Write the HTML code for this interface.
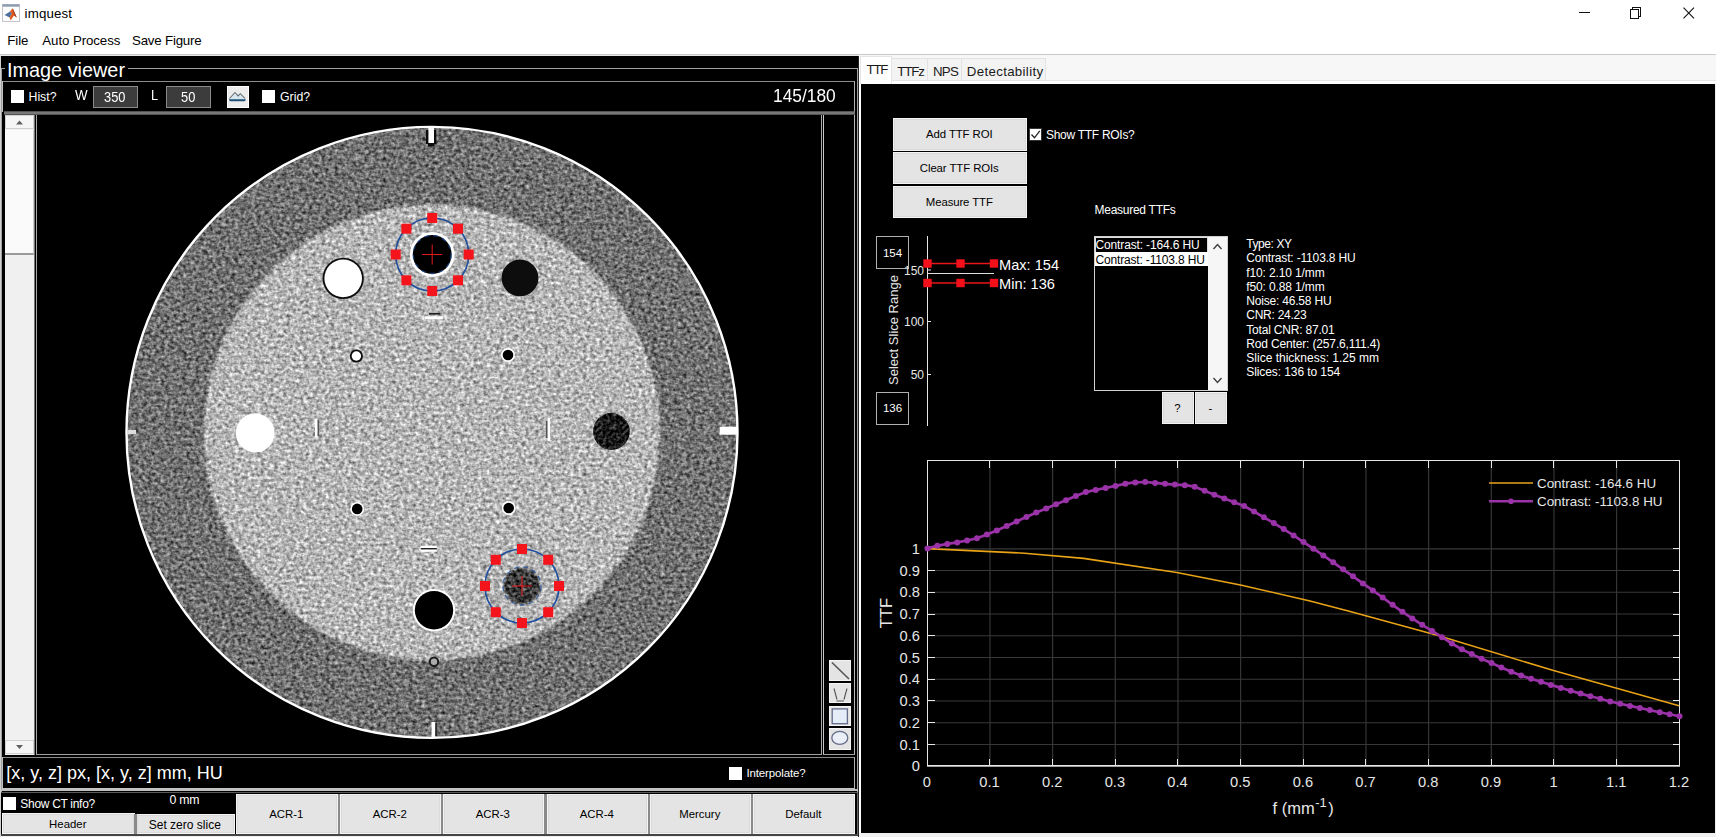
<!DOCTYPE html>
<html><head><meta charset="utf-8"><title>imquest</title>
<style>
html,body{margin:0;padding:0;}
body{width:1716px;height:837px;overflow:hidden;background:#fff;position:relative;font-family:"Liberation Sans",sans-serif;}
.t{position:absolute;white-space:nowrap;line-height:normal;font-family:"Liberation Sans",sans-serif;}
svg{position:absolute;left:0;top:0;overflow:visible}
</style></head><body>
<svg width="24" height="24" viewBox="0 0 24 24" style="left:0px;top:0px">
<rect x="2.5" y="4.5" width="17" height="17" fill="#fdfdfd" stroke="#c9c2c9" stroke-width="1"/>
<rect x="2.5" y="4.3" width="17" height="2.4" fill="#8d9db2"/>
<path d="M4.6 15 L10 11.4 L12 13.6 L9.6 17.6 Z" fill="#4f6f9e"/>
<path d="M10 11.4 L12.7 8.2 L14.8 13 L16.8 17.4 L14 15.6 L10.6 20.4 L9.6 17.6 L12 13.6 Z" fill="#e0581c"/>
<path d="M12.7 8.2 L14.8 13 L16.8 17.4 L14.6 15.8 L13.4 12 Z" fill="#9a3a26"/>
</svg>
<span class="t" style="left:24.60px;top:6.46px;font-size:13.30px;color:#000;letter-spacing:0.147px;">imquest</span>
<svg width="1716" height="30">
<path d="M1578.5 12.5 H1589.5" stroke="#111" stroke-width="1" fill="none" shape-rendering="crispEdges"/>
<path d="M1630.5 9.5 H1638.5 V18.5 H1630.5 Z M1632.5 9.5 V7.5 H1640.5 V16.5 H1638.5" stroke="#111" stroke-width="1" fill="none" shape-rendering="crispEdges"/>
<path d="M1683.5 7.7 L1694 18.4 M1694 7.7 L1683.5 18.4" stroke="#111" stroke-width="1.1" fill="none"/>
</svg>
<span class="t" style="left:7.20px;top:33.46px;font-size:13.30px;color:#000;letter-spacing:-0.058px;">File</span>
<span class="t" style="left:42.30px;top:33.46px;font-size:13.30px;color:#000;letter-spacing:-0.092px;">Auto Process</span>
<span class="t" style="left:132.00px;top:33.46px;font-size:13.30px;color:#000;letter-spacing:-0.201px;">Save Figure</span>
<div style="position:absolute;left:0px;top:54px;width:1716px;height:1px;background:#c9c9c9"></div>
<div style="position:absolute;left:0px;top:55px;width:1716px;height:1px;background:#e6e6e6"></div>
<div style="position:absolute;left:1px;top:56px;width:858px;height:780px;background:#000"></div>
<div style="position:absolute;left:0px;top:836px;width:859px;height:1px;background:#eee"></div>
<div style="position:absolute;left:0px;top:56px;width:1px;height:781px;background:#d0d0d0"></div>
<svg width="1716" height="837" shape-rendering="crispEdges"><rect x="1" y="68" width="4" height="1" fill="#a0a0a0"/><rect x="128" y="68" width="730" height="1" fill="#a0a0a0"/><rect x="1" y="68" width="1" height="724" fill="#a0a0a0"/><rect x="857" y="68" width="1" height="724" fill="#a0a0a0"/><rect x="1" y="789" width="857" height="1.7" fill="#c0c0c0"/><rect x="1" y="792" width="857" height="1" fill="#5a5a5a"/><rect x="1" y="834.3" width="857" height="1.2" fill="#444"/><rect x="857" y="792" width="1" height="43" fill="#666"/><rect x="2" y="81" width="853" height="1" fill="#8c8c8c"/><rect x="2" y="81" width="1" height="31" fill="#c0c0c0"/><rect x="854" y="81" width="1" height="31" fill="#b0b0b0"/><rect x="36" y="115" width="1" height="640" fill="#a8a8a8"/><rect x="821" y="115" width="1" height="640" fill="#a8a8a8"/><rect x="36" y="754" width="786" height="1" fill="#a0a0a0"/><rect x="823" y="115" width="1" height="640" fill="#c8c8c8"/><rect x="854" y="115" width="1" height="640" fill="#b8b8b8"/><rect x="823" y="754" width="32" height="1" fill="#a0a0a0"/><rect x="2" y="757" width="853" height="1" fill="#8a8a8a"/><rect x="2" y="757" width="1" height="32" fill="#c0c0c0"/><rect x="854" y="757" width="1" height="32" fill="#b0b0b0"/><rect x="2" y="788" width="853" height="1" fill="#c4c4c4"/></svg>
<svg width="1716" height="837"><rect x="4" y="111.3" width="851" height="3.4" fill="#787878"/></svg>
<span class="t" style="left:7.00px;top:59.24px;font-size:19.85px;color:#fff;">Image viewer</span>
<div style="position:absolute;left:11px;top:90px;width:13px;height:13px;background:#fff"></div>
<span class="t" style="left:28.50px;top:90.47px;font-size:12.30px;color:#fff;">Hist?</span>
<span class="t" style="left:75.30px;top:86.55px;font-size:14.20px;color:#fff;transform:scaleX(0.9400);transform-origin:0 0;">W</span>
<div style="position:absolute;left:93px;top:86px;width:45px;height:22px;background:#3c3c3c;border:1px solid #8a8a8a;box-sizing:border-box"></div>
<span class="t" style="left:103.89px;top:89.51px;font-size:13.80px;color:#fff;transform:scaleX(0.9300);transform-origin:0 0;">350</span>
<span class="t" style="left:151.00px;top:86.55px;font-size:14.20px;color:#fff;transform:scaleX(0.9000);transform-origin:0 0;">L</span>
<div style="position:absolute;left:166px;top:86px;width:45px;height:22px;background:#3c3c3c;border:1px solid #8a8a8a;box-sizing:border-box"></div>
<span class="t" style="left:180.66px;top:89.51px;font-size:13.80px;color:#fff;transform:scaleX(0.9300);transform-origin:0 0;">50</span>
<div style="position:absolute;left:227px;top:86px;width:22px;height:22px;background:#ececec;border:1px solid #fff;box-sizing:border-box"></div>
<svg width="22" height="22" style="left:227px;top:86px">
<path d="M2.5 12.5 L8 6.5 L11.5 10 L13.5 8 L18 12.5 L18 14.5 L3 14.5 Z" fill="#d7e7f0"/>
<path d="M2.5 12.5 L8 6.5 L11.5 10.3 M11 10 L13.3 7.7 L18 12.3" stroke="#6b6f72" stroke-width="1.1" fill="none"/>
<path d="M2 13.2 H18.6 V14 Q18.6 15.2 17 15.2 H3.5 Q2 15.2 2 13.2Z" fill="#1f4e74"/>
</svg>
<div style="position:absolute;left:262px;top:90px;width:13px;height:13px;background:#fff"></div>
<span class="t" style="left:280.00px;top:90.47px;font-size:12.30px;color:#fff;">Grid?</span>
<span class="t" style="left:773.30px;top:86.03px;font-size:18.20px;color:#fff;transform:scaleX(0.9550);transform-origin:0 0;">145/180</span>
<div style="position:absolute;left:5px;top:115px;width:29px;height:640px;background:#f0f0f0"></div>
<div style="position:absolute;left:34px;top:115px;width:1px;height:640px;background:#777"></div>
<div style="position:absolute;left:5px;top:115px;width:29px;height:14px;background:#f5f5f5;border:1px solid #d0d0d0;box-sizing:border-box"></div>
<div style="position:absolute;left:5px;top:740px;width:29px;height:14px;background:#f5f5f5;border:1px solid #d0d0d0;box-sizing:border-box"></div>
<div style="position:absolute;left:5px;top:130px;width:29px;height:125px;background:#fafafa;border-bottom:2px solid #9a9a9a;border-right:1px solid #ccc;box-sizing:border-box"></div>
<svg width="40" height="760"><path d="M16 124.5 L19.5 120.5 L23 124.5Z" fill="#606060"/><path d="M16 745 L23 745 L19.5 749Z" fill="#606060"/></svg>
<span class="t" style="left:6.30px;top:762.71px;font-size:18.00px;color:#fff;">[x, y, z] px, [x, y, z] mm, HU</span>
<div style="position:absolute;left:729px;top:767px;width:13px;height:13px;background:#fff"></div>
<span class="t" style="left:746.50px;top:766.79px;font-size:11.50px;color:#fff;letter-spacing:-0.145px;">Interpolate?</span>
<div style="position:absolute;left:3px;top:797px;width:13px;height:13px;background:#fff"></div>
<span class="t" style="left:20.30px;top:797.34px;font-size:12.00px;color:#fff;letter-spacing:-0.299px;">Show CT info?</span>
<span class="t" style="left:169.50px;top:793.37px;font-size:12.30px;color:#fff;letter-spacing:-0.288px;">0 mm</span>
<div style="position:absolute;left:2px;top:813px;width:133px;height:21px;background:#e4e4e4;border:1px solid #f4f4f4;box-shadow:inset 0 0 0 1px #dadada;box-sizing:border-box;"></div><span class="t" style="left:49.10px;top:818.26px;font-size:11.40px;color:#000;">Header</span>
<div style="position:absolute;left:136px;top:814px;width:99px;height:20px;background:#e4e4e4;border:1px solid #f4f4f4;box-shadow:inset 0 0 0 1px #dadada;box-sizing:border-box;"></div><span class="t" style="left:148.70px;top:817.94px;font-size:12.00px;color:#000;letter-spacing:0.012px;">Set zero slice</span>
<div style="position:absolute;left:236px;top:794px;width:619px;height:40px;background:#8a8a8a"></div>
<div style="position:absolute;left:134px;top:814px;width:3px;height:20px;background:#8a8a8a"></div>
<div style="position:absolute;left:236px;top:794px;width:102px;height:40px;background:#e4e4e4;border:1px solid #f4f4f4;box-shadow:inset 0 0 0 1px #dadada;box-sizing:border-box;"></div><span class="t" style="left:269.20px;top:808.26px;font-size:11.40px;color:#000;">ACR-1</span>
<div style="position:absolute;left:340px;top:794px;width:101px;height:40px;background:#e4e4e4;border:1px solid #f4f4f4;box-shadow:inset 0 0 0 1px #dadada;box-sizing:border-box;"></div><span class="t" style="left:372.70px;top:808.26px;font-size:11.40px;color:#000;">ACR-2</span>
<div style="position:absolute;left:443px;top:794px;width:101px;height:40px;background:#e4e4e4;border:1px solid #f4f4f4;box-shadow:inset 0 0 0 1px #dadada;box-sizing:border-box;"></div><span class="t" style="left:475.70px;top:808.26px;font-size:11.40px;color:#000;">ACR-3</span>
<div style="position:absolute;left:547px;top:794px;width:101px;height:40px;background:#e4e4e4;border:1px solid #f4f4f4;box-shadow:inset 0 0 0 1px #dadada;box-sizing:border-box;"></div><span class="t" style="left:579.70px;top:808.26px;font-size:11.40px;color:#000;">ACR-4</span>
<div style="position:absolute;left:650px;top:794px;width:101px;height:40px;background:#e4e4e4;border:1px solid #f4f4f4;box-shadow:inset 0 0 0 1px #dadada;box-sizing:border-box;"></div><span class="t" style="left:679.21px;top:808.26px;font-size:11.40px;color:#000;">Mercury</span>
<div style="position:absolute;left:753px;top:794px;width:102px;height:40px;background:#e4e4e4;border:1px solid #f4f4f4;box-shadow:inset 0 0 0 1px #dadada;box-sizing:border-box;"></div><span class="t" style="left:785.24px;top:808.26px;font-size:11.40px;color:#000;">Default</span>
<div style="position:absolute;left:829.4px;top:660px;width:21.6px;height:21px;background:#e4e4e4;border:1px solid #f4f4f4;box-sizing:border-box"></div>
<div style="position:absolute;left:829.4px;top:683px;width:21.6px;height:20px;background:#e4e4e4;border:1px solid #f4f4f4;box-sizing:border-box"></div>
<div style="position:absolute;left:829.4px;top:706px;width:21.6px;height:20px;background:#e4e4e4;border:1px solid #f4f4f4;box-sizing:border-box"></div>
<div style="position:absolute;left:829.4px;top:728px;width:21.6px;height:22px;background:#e4e4e4;border:1px solid #f4f4f4;box-sizing:border-box"></div>
<svg width="1716" height="837">
<path d="M832 662.5 L849 679" stroke="#555" stroke-width="1.6" fill="none"/>
<path d="M834 688.5 L837 699.5 M847 688.5 L844 699.5 M836.5 701 H844" stroke="#555" stroke-width="1.1" fill="none"/>
<rect x="832.2" y="708.9" width="15.2" height="14.8" fill="#e4ecf8" stroke="#626c88" stroke-width="1.3"/>
<ellipse cx="839.8" cy="737.8" rx="8" ry="6.5" fill="#e9eef7" stroke="#626c88" stroke-width="1.3"/>
</svg>
<svg width="1716" height="837">
<defs>
<filter id="nz" x="0" y="0" width="100%" height="100%" color-interpolation-filters="sRGB">
<feTurbulence type="fractalNoise" baseFrequency="0.31 0.26" numOctaves="2" seed="7" result="n1"/>
<feTurbulence type="fractalNoise" baseFrequency="0.23 0.34" numOctaves="2" seed="23" result="n2"/>
<feComposite in="n1" in2="n2" operator="arithmetic" k1="0" k2="0.5" k3="0.5" k4="0" result="n"/>
<feColorMatrix in="n" type="matrix" values="1 0 0 0 0  1 0 0 0 0  1 0 0 0 0  0 0 0 0 1" result="g"/>
<feGaussianBlur in="SourceGraphic" stdDeviation="0.8" result="b"/>
<feComposite in="b" in2="g" operator="arithmetic" k1="0" k2="1" k3="1.2" k4="-0.6" result="s"/>
<feComposite in="s" in2="SourceGraphic" operator="in"/>
</filter>
<filter id="nz2" x="0" y="0" width="100%" height="100%" color-interpolation-filters="sRGB">
<feTurbulence type="fractalNoise" baseFrequency="0.3" numOctaves="2" seed="11" result="n"/>
<feColorMatrix in="n" type="matrix" values="1 0 0 0 0  1 0 0 0 0  1 0 0 0 0  0 0 0 0 1" result="g"/>
<feComposite in="SourceGraphic" in2="g" operator="arithmetic" k1="0" k2="1" k3="0.8" k4="-0.38" result="s"/>
<feComposite in="s" in2="SourceGraphic" operator="in"/>
</filter>
<filter id="sf" x="-5%" y="-5%" width="110%" height="110%"><feGaussianBlur stdDeviation="0.7"/></filter>
</defs>
<g filter="url(#nz)">
<circle cx="432" cy="432.4" r="305.5" fill="#707070"/>
<circle cx="432" cy="432.4" r="228" fill="#b4b4b4"/>
<circle cx="522" cy="586" r="18" fill="#3a3a3a"/>
</g>
<g filter="url(#nz2)"><circle cx="611.4" cy="431.5" r="18.4" fill="#161616"/></g>
<circle cx="432" cy="432.4" r="305.5" fill="none" stroke="#fff" stroke-width="2.4" filter="url(#sf)"/>
<g filter="url(#sf)">
<!-- rods -->
<circle cx="343.2" cy="278.4" r="20.6" fill="#0a0a0a"/><circle cx="343.2" cy="278.4" r="18.8" fill="#fff"/>
<circle cx="520" cy="277.9" r="18.4" fill="#0b0b0b"/>
<circle cx="255.2" cy="433" r="19.4" fill="#fff"/>
<circle cx="432.2" cy="254.5" r="22.4" fill="#fff"/><circle cx="432.2" cy="254.5" r="19.4" fill="#050505"/>
<circle cx="434" cy="610.2" r="21.2" fill="#fff"/><circle cx="434" cy="610.2" r="19.2" fill="#000"/>
<!-- small dots -->
<circle cx="356.4" cy="356" r="6.6" fill="#111"/><circle cx="356.4" cy="356" r="4.7" fill="#fff"/>
<circle cx="508" cy="355" r="7" fill="#fff"/><circle cx="508" cy="355" r="5.3" fill="#000"/>
<circle cx="357.2" cy="508.9" r="7" fill="#fff"/><circle cx="357.2" cy="508.9" r="5.3" fill="#000"/>
<circle cx="508.7" cy="508" r="7" fill="#fff"/><circle cx="508.7" cy="508" r="5.3" fill="#000"/>
<circle cx="434" cy="661.7" r="4.2" fill="#aaa" stroke="#1a1a1a" stroke-width="2"/>
<!-- edge markers -->
<rect x="428.3" y="126" width="5.7" height="17" fill="#fff"/><rect x="426" y="130" width="2.3" height="14" fill="#111"/><rect x="434" y="130" width="2.3" height="14" fill="#111"/><rect x="428" y="143" width="6.5" height="3.5" fill="#111"/>
<rect x="431.5" y="722" width="3.8" height="16" fill="#fff"/><rect x="435.3" y="723" width="1.6" height="13" fill="#222"/>
<rect x="719.6" y="426.7" width="18.4" height="8" fill="#fff"/>
<rect x="127" y="430" width="9" height="4" fill="#ddd"/>
<!-- inner ticks -->
<rect x="425" y="316.3" width="17.7" height="3" fill="#fff"/><rect x="429" y="313" width="11" height="1.6" fill="#222"/>
<rect x="420.8" y="545.8" width="16" height="2.2" fill="#fff"/><rect x="420.8" y="548" width="16" height="1.6" fill="#222"/><rect x="420.8" y="549.6" width="16" height="2.2" fill="#fff"/>
<rect x="315" y="418.7" width="2.6" height="19" fill="#fff"/><rect x="317.6" y="420" width="1.6" height="16" fill="#555"/>
<rect x="547.6" y="418" width="2.6" height="23" fill="#fff"/><rect x="545.8" y="421" width="1.6" height="17" fill="#555"/>
</g>
</svg>
<svg width="1716" height="837"><circle cx="432.2" cy="254.5" r="36.5" fill="none" stroke="#1f4f9e" stroke-width="1.6"/><circle cx="432.2" cy="254.5" r="19" fill="none" stroke="#1f4f9e" stroke-width="1.3" stroke-dasharray="5 4" opacity="0.75"/><path d="M422.2 254.5 h20 M432.2 244.5 v20" stroke="#e8181c" stroke-width="1" fill="none"/><rect x="463.7" y="249.5" width="10" height="10" fill="#f4141c"/><rect x="453.0" y="275.3" width="10" height="10" fill="#f4141c"/><rect x="427.2" y="286.0" width="10" height="10" fill="#f4141c"/><rect x="401.4" y="275.3" width="10" height="10" fill="#f4141c"/><rect x="390.7" y="249.5" width="10" height="10" fill="#f4141c"/><rect x="401.4" y="223.7" width="10" height="10" fill="#f4141c"/><rect x="427.2" y="213.0" width="10" height="10" fill="#f4141c"/><rect x="453.0" y="223.7" width="10" height="10" fill="#f4141c"/><circle cx="522" cy="586" r="37" fill="none" stroke="#1f4f9e" stroke-width="1.6"/><circle cx="522" cy="586" r="19" fill="none" stroke="#1f4f9e" stroke-width="1.3" stroke-dasharray="5 4" opacity="0.75"/><path d="M512 586 h20 M522 576 v20" stroke="#e8181c" stroke-width="1" fill="none"/><rect x="554.0" y="581.0" width="10" height="10" fill="#f4141c"/><rect x="543.2" y="607.2" width="10" height="10" fill="#f4141c"/><rect x="517.0" y="618.0" width="10" height="10" fill="#f4141c"/><rect x="490.8" y="607.2" width="10" height="10" fill="#f4141c"/><rect x="480.0" y="581.0" width="10" height="10" fill="#f4141c"/><rect x="490.8" y="554.8" width="10" height="10" fill="#f4141c"/><rect x="517.0" y="544.0" width="10" height="10" fill="#f4141c"/><rect x="543.2" y="554.8" width="10" height="10" fill="#f4141c"/></svg>
<div style="position:absolute;left:859px;top:55px;width:857px;height:25px;background:#f7f7f7"></div>
<div style="position:absolute;left:859px;top:80px;width:857px;height:1px;background:#e6e6e6"></div>
<div style="position:absolute;left:859px;top:81px;width:857px;height:3px;background:#fff"></div>
<div style="position:absolute;left:859px;top:56px;width:2px;height:781px;background:#fff"></div>
<div style="position:absolute;left:858px;top:56px;width:1px;height:781px;background:#222"></div>
<div style="position:absolute;left:861px;top:84px;width:854px;height:749px;background:#000"></div>
<div style="position:absolute;left:859px;top:833px;width:857px;height:4px;background:#f0f0f0"></div>
<div style="position:absolute;left:1715px;top:84px;width:1px;height:753px;background:#f0f0f0"></div>
<div style="position:absolute;left:860px;top:56px;width:32px;height:28px;background:#fff;border-left:1px solid #e4e4e4;border-top:1px solid #e4e4e4;border-right:1px solid #e4e4e4;box-sizing:border-box"></div>
<div style="position:absolute;left:892px;top:58px;width:36px;height:23px;background:#f3f3f3;border:1px solid #e2e2e2;border-left:none;box-sizing:border-box"></div>
<div style="position:absolute;left:928px;top:58px;width:34px;height:23px;background:#f3f3f3;border:1px solid #e2e2e2;border-left:none;box-sizing:border-box"></div>
<div style="position:absolute;left:962px;top:58px;width:84px;height:23px;background:#f3f3f3;border:1px solid #e2e2e2;border-left:none;box-sizing:border-box"></div>
<span class="t" style="left:866.60px;top:61.96px;font-size:13.30px;color:#1a1a1a;letter-spacing:-1.258px;">TTF</span>
<span class="t" style="left:897.20px;top:63.66px;font-size:13.30px;color:#1a1a1a;letter-spacing:-1.106px;">TTFz</span>
<span class="t" style="left:933.00px;top:63.66px;font-size:13.30px;color:#1a1a1a;letter-spacing:-0.783px;">NPS</span>
<span class="t" style="left:966.80px;top:63.66px;font-size:13.30px;color:#1a1a1a;letter-spacing:0.320px;">Detectability</span>
<div style="position:absolute;left:893px;top:118px;width:134px;height:33px;background:#e4e4e4;border:1px solid #f4f4f4;box-shadow:inset 0 0 0 1px #dadada;box-sizing:border-box;"></div><span class="t" style="left:926.05px;top:128.26px;font-size:11.40px;color:#000;letter-spacing:-0.097px;">Add TTF ROI</span>
<div style="position:absolute;left:893px;top:152px;width:134px;height:32px;background:#e4e4e4;border:1px solid #f4f4f4;box-shadow:inset 0 0 0 1px #dadada;box-sizing:border-box;"></div><span class="t" style="left:919.80px;top:161.76px;font-size:11.40px;color:#000;letter-spacing:-0.088px;">Clear TTF ROIs</span>
<div style="position:absolute;left:893px;top:186px;width:134px;height:32px;background:#e4e4e4;border:1px solid #f4f4f4;box-shadow:inset 0 0 0 1px #dadada;box-sizing:border-box;"></div><span class="t" style="left:925.80px;top:195.76px;font-size:11.40px;color:#000;letter-spacing:-0.110px;">Measure TTF</span>
<div style="position:absolute;left:1029px;top:128px;width:13px;height:13px;background:#fff;border:1px solid #333;box-sizing:border-box"></div>
<svg width="1716" height="300"><path d="M1031.5 134.5 L1034.5 137.8 L1039.8 130.8" stroke="#222" stroke-width="1.3" fill="none"/></svg>
<span class="t" style="left:1046.00px;top:127.94px;font-size:12.00px;color:#fff;letter-spacing:-0.283px;">Show TTF ROIs?</span>
<span class="t" style="left:1094.50px;top:202.64px;font-size:12.00px;color:#fff;letter-spacing:-0.267px;">Measured TTFs</span>
<div style="position:absolute;left:876px;top:236px;width:33px;height:33px;background:#000;border:1px solid #b0b0b0;box-sizing:border-box"></div>
<span class="t" style="left:882.91px;top:246.79px;font-size:11.50px;color:#fff;">154</span>
<div style="position:absolute;left:876px;top:392px;width:33px;height:33px;background:#000;border:1px solid #b0b0b0;box-sizing:border-box"></div>
<span class="t" style="left:882.91px;top:401.89px;font-size:11.50px;color:#fff;">136</span>
<svg width="1716" height="837"><path d="M927.5 236 V426" stroke="#e6e6e6" stroke-width="1" shape-rendering="crispEdges"/><path d="M927 270 H931" stroke="#e6e6e6" stroke-width="1"/><path d="M927 321.5 H931" stroke="#e6e6e6" stroke-width="1"/><path d="M927 374.5 H931" stroke="#e6e6e6" stroke-width="1"/><path d="M927 273.5 H994" stroke="#e0e0e0" stroke-width="1" shape-rendering="crispEdges"/><path d="M927 263.5 H994" stroke="#e8161a" stroke-width="1.3"/><rect x="923.3" y="259.3" width="8.4" height="8.4" fill="#f4101a"/><rect x="956.3" y="259.3" width="8.4" height="8.4" fill="#f4101a"/><rect x="989.8" y="259.3" width="8.4" height="8.4" fill="#f4101a"/><path d="M927 283 H994" stroke="#e8161a" stroke-width="1.3"/><rect x="923.3" y="278.8" width="8.4" height="8.4" fill="#f4101a"/><rect x="956.3" y="278.8" width="8.4" height="8.4" fill="#f4101a"/><rect x="989.8" y="278.8" width="8.4" height="8.4" fill="#f4101a"/></svg>
<span class="t" style="left:903.98px;top:263.64px;font-size:12.00px;color:#e6e6e6;">150</span>
<span class="t" style="left:903.98px;top:314.64px;font-size:12.00px;color:#e6e6e6;">100</span>
<span class="t" style="left:910.65px;top:368.14px;font-size:12.00px;color:#e6e6e6;">50</span>
<span class="t" style="left:999.00px;top:256.99px;font-size:14.60px;color:#fff;">Max: 154</span>
<span class="t" style="left:999.00px;top:275.99px;font-size:14.60px;color:#fff;">Min: 136</span>
<span class="t" style="left:892.5px;top:330px;font-size:13px;color:#e6e6e6;transform:translate(-50%,-50%) rotate(-90deg);">Select Slice Range</span>
<div style="position:absolute;left:1094px;top:236px;width:134px;height:155px;background:#000;border:1px solid #d0d0d0;box-sizing:border-box"></div>
<div style="position:absolute;left:1208px;top:237px;width:19px;height:153px;background:#f6f6f6"></div>
<div style="position:absolute;left:1095px;top:237px;width:113px;height:14.5px;background:#000;border:1px solid #ddd;border-bottom:none;box-sizing:border-box"></div>
<div style="position:absolute;left:1095px;top:251.5px;width:113px;height:14px;background:#fff"></div>
<span class="t" style="left:1095.50px;top:237.94px;font-size:12.00px;color:#fff;letter-spacing:-0.143px;">Contrast: -164.6 HU</span>
<span class="t" style="left:1095.50px;top:252.74px;font-size:12.00px;color:#000;letter-spacing:-0.165px;">Contrast: -1103.8 HU</span>
<svg width="1716" height="837"><path d="M1213.5 249 L1217.5 244.5 L1221.5 249 M1213.5 378 L1217.5 382.5 L1221.5 378" stroke="#404040" stroke-width="1.4" fill="none"/></svg>
<div style="position:absolute;left:1162px;top:392px;width:32px;height:32px;background:#e4e4e4;border:1px solid #f4f4f4;box-shadow:inset 0 0 0 1px #dadada;box-sizing:border-box;"></div><span class="t" style="left:1174.13px;top:401.76px;font-size:11.40px;color:#000;">?</span>
<div style="position:absolute;left:1195px;top:392px;width:32px;height:32px;background:#e4e4e4;border:1px solid #f4f4f4;box-shadow:inset 0 0 0 1px #dadada;box-sizing:border-box;"></div><span class="t" style="left:1208.40px;top:401.76px;font-size:11.40px;color:#000;">-</span>
<span class="t" style="left:1246.30px;top:237.14px;font-size:12.00px;color:#fff;letter-spacing:-0.424px;">Type: XY</span>
<span class="t" style="left:1246.30px;top:251.40px;font-size:12.00px;color:#fff;letter-spacing:-0.165px;">Contrast: -1103.8 HU</span>
<span class="t" style="left:1246.30px;top:265.66px;font-size:12.00px;color:#fff;letter-spacing:-0.131px;">f10: 2.10 1/mm</span>
<span class="t" style="left:1246.30px;top:279.92px;font-size:12.00px;color:#fff;letter-spacing:-0.131px;">f50: 0.88 1/mm</span>
<span class="t" style="left:1246.30px;top:294.18px;font-size:12.00px;color:#fff;letter-spacing:-0.196px;">Noise: 46.58 HU</span>
<span class="t" style="left:1246.30px;top:308.44px;font-size:12.00px;color:#fff;letter-spacing:-0.260px;">CNR: 24.23</span>
<span class="t" style="left:1246.30px;top:322.70px;font-size:12.00px;color:#fff;letter-spacing:-0.199px;">Total CNR: 87.01</span>
<span class="t" style="left:1246.30px;top:336.96px;font-size:12.00px;color:#fff;letter-spacing:-0.154px;">Rod Center: (257.6,111.4)</span>
<span class="t" style="left:1246.30px;top:351.22px;font-size:12.00px;color:#fff;letter-spacing:-0.001px;">Slice thickness: 1.25 mm</span>
<span class="t" style="left:1246.30px;top:365.48px;font-size:12.00px;color:#fff;letter-spacing:-0.089px;">Slices: 136 to 154</span>
<svg width="1716" height="837"><path d="M989.97 460.5 V765.5" stroke="#383838" stroke-width="1.15"/><path d="M1052.63 460.5 V765.5" stroke="#383838" stroke-width="1.15"/><path d="M1115.30 460.5 V765.5" stroke="#383838" stroke-width="1.15"/><path d="M1177.97 460.5 V765.5" stroke="#383838" stroke-width="1.15"/><path d="M1240.63 460.5 V765.5" stroke="#383838" stroke-width="1.15"/><path d="M1303.30 460.5 V765.5" stroke="#383838" stroke-width="1.15"/><path d="M1365.97 460.5 V765.5" stroke="#383838" stroke-width="1.15"/><path d="M1428.63 460.5 V765.5" stroke="#383838" stroke-width="1.15"/><path d="M1491.30 460.5 V765.5" stroke="#383838" stroke-width="1.15"/><path d="M1553.97 460.5 V765.5" stroke="#383838" stroke-width="1.15"/><path d="M1616.63 460.5 V765.5" stroke="#383838" stroke-width="1.15"/><path d="M927.5 744.46 H1679.5" stroke="#383838" stroke-width="1.15"/><path d="M927.5 722.72 H1679.5" stroke="#383838" stroke-width="1.15"/><path d="M927.5 700.98 H1679.5" stroke="#383838" stroke-width="1.15"/><path d="M927.5 679.24 H1679.5" stroke="#383838" stroke-width="1.15"/><path d="M927.5 657.50 H1679.5" stroke="#383838" stroke-width="1.15"/><path d="M927.5 635.76 H1679.5" stroke="#383838" stroke-width="1.15"/><path d="M927.5 614.02 H1679.5" stroke="#383838" stroke-width="1.15"/><path d="M927.5 592.28 H1679.5" stroke="#383838" stroke-width="1.15"/><path d="M927.5 570.54 H1679.5" stroke="#383838" stroke-width="1.15"/><path d="M927.5 548.80 H1679.5" stroke="#383838" stroke-width="1.15"/><rect x="927.5" y="460.5" width="752" height="305" fill="none" stroke="#e6e6e6" stroke-width="1" shape-rendering="crispEdges"/><rect x="927" y="765" width="753" height="1.7" fill="#e6e6e6"/><path d="M989.5 765.5 v-7 M989.5 460.5 v7" stroke="#e6e6e6" stroke-width="1" shape-rendering="crispEdges"/><path d="M1052.5 765.5 v-7 M1052.5 460.5 v7" stroke="#e6e6e6" stroke-width="1" shape-rendering="crispEdges"/><path d="M1115.5 765.5 v-7 M1115.5 460.5 v7" stroke="#e6e6e6" stroke-width="1" shape-rendering="crispEdges"/><path d="M1177.5 765.5 v-7 M1177.5 460.5 v7" stroke="#e6e6e6" stroke-width="1" shape-rendering="crispEdges"/><path d="M1240.5 765.5 v-7 M1240.5 460.5 v7" stroke="#e6e6e6" stroke-width="1" shape-rendering="crispEdges"/><path d="M1303.5 765.5 v-7 M1303.5 460.5 v7" stroke="#e6e6e6" stroke-width="1" shape-rendering="crispEdges"/><path d="M1365.5 765.5 v-7 M1365.5 460.5 v7" stroke="#e6e6e6" stroke-width="1" shape-rendering="crispEdges"/><path d="M1428.5 765.5 v-7 M1428.5 460.5 v7" stroke="#e6e6e6" stroke-width="1" shape-rendering="crispEdges"/><path d="M1491.5 765.5 v-7 M1491.5 460.5 v7" stroke="#e6e6e6" stroke-width="1" shape-rendering="crispEdges"/><path d="M1553.5 765.5 v-7 M1553.5 460.5 v7" stroke="#e6e6e6" stroke-width="1" shape-rendering="crispEdges"/><path d="M1616.5 765.5 v-7 M1616.5 460.5 v7" stroke="#e6e6e6" stroke-width="1" shape-rendering="crispEdges"/><path d="M927.5 744.5 h7 M1679.5 744.5 h-7" stroke="#e6e6e6" stroke-width="1" shape-rendering="crispEdges"/><path d="M927.5 722.5 h7 M1679.5 722.5 h-7" stroke="#e6e6e6" stroke-width="1" shape-rendering="crispEdges"/><path d="M927.5 700.5 h7 M1679.5 700.5 h-7" stroke="#e6e6e6" stroke-width="1" shape-rendering="crispEdges"/><path d="M927.5 679.5 h7 M1679.5 679.5 h-7" stroke="#e6e6e6" stroke-width="1" shape-rendering="crispEdges"/><path d="M927.5 657.5 h7 M1679.5 657.5 h-7" stroke="#e6e6e6" stroke-width="1" shape-rendering="crispEdges"/><path d="M927.5 635.5 h7 M1679.5 635.5 h-7" stroke="#e6e6e6" stroke-width="1" shape-rendering="crispEdges"/><path d="M927.5 614.5 h7 M1679.5 614.5 h-7" stroke="#e6e6e6" stroke-width="1" shape-rendering="crispEdges"/><path d="M927.5 592.5 h7 M1679.5 592.5 h-7" stroke="#e6e6e6" stroke-width="1" shape-rendering="crispEdges"/><path d="M927.5 570.5 h7 M1679.5 570.5 h-7" stroke="#e6e6e6" stroke-width="1" shape-rendering="crispEdges"/><path d="M927.5 548.5 h7 M1679.5 548.5 h-7" stroke="#e6e6e6" stroke-width="1" shape-rendering="crispEdges"/><polyline points="926.8,548.6 1024.5,553.2 1083.6,558.4 1176.8,572.5 1240.5,585.0 1310.0,601.0 1350.2,611.6 1438.0,635.4 1553.5,670.6 1679.0,705.7" fill="none" stroke="#e8a317" stroke-width="1.6" stroke-linejoin="round"/><polyline points="927.5,548.4 937.4,545.8 947.3,543.9 957.2,542.4 967.1,540.5 977.0,538.2 986.9,534.6 996.8,530.5 1006.7,526.1 1016.6,521.5 1026.4,516.9 1036.3,512.6 1046.2,508.5 1056.1,504.3 1066.0,500.2 1075.9,496.0 1085.8,492.1 1095.7,489.9 1105.6,488.0 1115.5,485.9 1125.4,483.7 1135.3,482.4 1145.2,482.0 1155.1,482.9 1165.0,483.8 1174.9,484.6 1184.8,485.2 1194.7,486.7 1204.6,490.8 1214.4,494.7 1224.3,498.5 1234.2,502.2 1244.1,506.0 1254.0,511.5 1263.9,517.3 1273.8,523.1 1283.7,529.1 1293.6,535.4 1303.5,542.1 1313.4,548.7 1323.3,555.4 1333.2,562.3 1343.1,569.3 1353.0,576.3 1362.9,583.4 1372.8,590.4 1382.7,597.5 1392.6,604.8 1402.4,611.8 1412.3,618.4 1422.2,624.8 1432.1,630.9 1442.0,637.2 1451.9,643.5 1461.8,649.3 1471.7,654.1 1481.6,658.8 1491.5,663.1 1501.4,667.4 1511.3,671.8 1521.2,675.6 1531.1,678.7 1541.0,681.8 1550.9,684.9 1560.8,687.9 1570.7,690.8 1580.6,693.6 1590.4,696.2 1600.3,698.8 1610.2,701.5 1620.1,703.8 1630.0,705.9 1639.9,708.0 1649.8,710.1 1659.7,712.2 1669.6,714.2 1679.5,716.2" fill="none" stroke="#9a32a8" stroke-width="2.7" stroke-linejoin="round"/><g fill="#9a32a8"><circle cx="927.5" cy="548.4" r="3"/><circle cx="937.4" cy="545.8" r="3"/><circle cx="947.3" cy="543.9" r="3"/><circle cx="957.2" cy="542.4" r="3"/><circle cx="967.1" cy="540.5" r="3"/><circle cx="977.0" cy="538.2" r="3"/><circle cx="986.9" cy="534.6" r="3"/><circle cx="996.8" cy="530.5" r="3"/><circle cx="1006.7" cy="526.1" r="3"/><circle cx="1016.6" cy="521.5" r="3"/><circle cx="1026.4" cy="516.9" r="3"/><circle cx="1036.3" cy="512.6" r="3"/><circle cx="1046.2" cy="508.5" r="3"/><circle cx="1056.1" cy="504.3" r="3"/><circle cx="1066.0" cy="500.2" r="3"/><circle cx="1075.9" cy="496.0" r="3"/><circle cx="1085.8" cy="492.1" r="3"/><circle cx="1095.7" cy="489.9" r="3"/><circle cx="1105.6" cy="488.0" r="3"/><circle cx="1115.5" cy="485.9" r="3"/><circle cx="1125.4" cy="483.7" r="3"/><circle cx="1135.3" cy="482.4" r="3"/><circle cx="1145.2" cy="482.0" r="3"/><circle cx="1155.1" cy="482.9" r="3"/><circle cx="1165.0" cy="483.8" r="3"/><circle cx="1174.9" cy="484.6" r="3"/><circle cx="1184.8" cy="485.2" r="3"/><circle cx="1194.7" cy="486.7" r="3"/><circle cx="1204.6" cy="490.8" r="3"/><circle cx="1214.4" cy="494.7" r="3"/><circle cx="1224.3" cy="498.5" r="3"/><circle cx="1234.2" cy="502.2" r="3"/><circle cx="1244.1" cy="506.0" r="3"/><circle cx="1254.0" cy="511.5" r="3"/><circle cx="1263.9" cy="517.3" r="3"/><circle cx="1273.8" cy="523.1" r="3"/><circle cx="1283.7" cy="529.1" r="3"/><circle cx="1293.6" cy="535.4" r="3"/><circle cx="1303.5" cy="542.1" r="3"/><circle cx="1313.4" cy="548.7" r="3"/><circle cx="1323.3" cy="555.4" r="3"/><circle cx="1333.2" cy="562.3" r="3"/><circle cx="1343.1" cy="569.3" r="3"/><circle cx="1353.0" cy="576.3" r="3"/><circle cx="1362.9" cy="583.4" r="3"/><circle cx="1372.8" cy="590.4" r="3"/><circle cx="1382.7" cy="597.5" r="3"/><circle cx="1392.6" cy="604.8" r="3"/><circle cx="1402.4" cy="611.8" r="3"/><circle cx="1412.3" cy="618.4" r="3"/><circle cx="1422.2" cy="624.8" r="3"/><circle cx="1432.1" cy="630.9" r="3"/><circle cx="1442.0" cy="637.2" r="3"/><circle cx="1451.9" cy="643.5" r="3"/><circle cx="1461.8" cy="649.3" r="3"/><circle cx="1471.7" cy="654.1" r="3"/><circle cx="1481.6" cy="658.8" r="3"/><circle cx="1491.5" cy="663.1" r="3"/><circle cx="1501.4" cy="667.4" r="3"/><circle cx="1511.3" cy="671.8" r="3"/><circle cx="1521.2" cy="675.6" r="3"/><circle cx="1531.1" cy="678.7" r="3"/><circle cx="1541.0" cy="681.8" r="3"/><circle cx="1550.9" cy="684.9" r="3"/><circle cx="1560.8" cy="687.9" r="3"/><circle cx="1570.7" cy="690.8" r="3"/><circle cx="1580.6" cy="693.6" r="3"/><circle cx="1590.4" cy="696.2" r="3"/><circle cx="1600.3" cy="698.8" r="3"/><circle cx="1610.2" cy="701.5" r="3"/><circle cx="1620.1" cy="703.8" r="3"/><circle cx="1630.0" cy="705.9" r="3"/><circle cx="1639.9" cy="708.0" r="3"/><circle cx="1649.8" cy="710.1" r="3"/><circle cx="1659.7" cy="712.2" r="3"/><circle cx="1669.6" cy="714.2" r="3"/><circle cx="1679.5" cy="716.2" r="3"/></g><path d="M1489 483 H1533" stroke="#e8a317" stroke-width="1.6"/><path d="M1489 501.2 H1533" stroke="#9a32a8" stroke-width="2.6"/><circle cx="1511" cy="501.2" r="2.8" fill="#9a32a8"/></svg>
<span class="t" style="left:922.82px;top:774.42px;font-size:14.67px;color:#e6e6e6;">0</span>
<span class="t" style="left:979.37px;top:774.42px;font-size:14.67px;color:#e6e6e6;">0.1</span>
<span class="t" style="left:1042.04px;top:774.42px;font-size:14.67px;color:#e6e6e6;">0.2</span>
<span class="t" style="left:1104.70px;top:774.42px;font-size:14.67px;color:#e6e6e6;">0.3</span>
<span class="t" style="left:1167.37px;top:774.42px;font-size:14.67px;color:#e6e6e6;">0.4</span>
<span class="t" style="left:1230.04px;top:774.42px;font-size:14.67px;color:#e6e6e6;">0.5</span>
<span class="t" style="left:1292.70px;top:774.42px;font-size:14.67px;color:#e6e6e6;">0.6</span>
<span class="t" style="left:1355.37px;top:774.42px;font-size:14.67px;color:#e6e6e6;">0.7</span>
<span class="t" style="left:1418.04px;top:774.42px;font-size:14.67px;color:#e6e6e6;">0.8</span>
<span class="t" style="left:1480.70px;top:774.42px;font-size:14.67px;color:#e6e6e6;">0.9</span>
<span class="t" style="left:1549.49px;top:774.42px;font-size:14.67px;color:#e6e6e6;">1</span>
<span class="t" style="left:1606.04px;top:774.42px;font-size:14.67px;color:#e6e6e6;">1.1</span>
<span class="t" style="left:1668.70px;top:774.42px;font-size:14.67px;color:#e6e6e6;">1.2</span>
<span class="t" style="left:911.84px;top:758.32px;font-size:14.67px;color:#e6e6e6;">0</span>
<span class="t" style="left:899.61px;top:736.58px;font-size:14.67px;color:#e6e6e6;">0.1</span>
<span class="t" style="left:899.61px;top:714.84px;font-size:14.67px;color:#e6e6e6;">0.2</span>
<span class="t" style="left:899.61px;top:693.10px;font-size:14.67px;color:#e6e6e6;">0.3</span>
<span class="t" style="left:899.61px;top:671.36px;font-size:14.67px;color:#e6e6e6;">0.4</span>
<span class="t" style="left:899.61px;top:649.62px;font-size:14.67px;color:#e6e6e6;">0.5</span>
<span class="t" style="left:899.61px;top:627.88px;font-size:14.67px;color:#e6e6e6;">0.6</span>
<span class="t" style="left:899.61px;top:606.14px;font-size:14.67px;color:#e6e6e6;">0.7</span>
<span class="t" style="left:899.61px;top:584.40px;font-size:14.67px;color:#e6e6e6;">0.8</span>
<span class="t" style="left:899.61px;top:562.66px;font-size:14.67px;color:#e6e6e6;">0.9</span>
<span class="t" style="left:911.84px;top:540.92px;font-size:14.67px;color:#e6e6e6;">1</span>
<span class="t" style="left:886px;top:612.5px;font-size:16.5px;color:#e6e6e6;transform:translate(-50%,-50%) rotate(-90deg);">TTF</span>
<span class="t" style="left:1272.6px;top:799.17px;font-size:16.5px;color:#e6e6e6;">f (mm<span style="font-size:13px;position:relative;top:-7px;margin:0 1.5px 0 0.5px">-1</span>)</span>
<span class="t" style="left:1537.00px;top:476.47px;font-size:13.40px;color:#e6e6e6;">Contrast: -164.6 HU</span>
<span class="t" style="left:1537.00px;top:494.47px;font-size:13.40px;color:#e6e6e6;">Contrast: -1103.8 HU</span>
</body></html>
